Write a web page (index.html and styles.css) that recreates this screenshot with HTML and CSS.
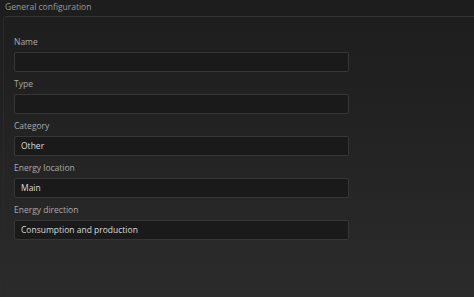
FILE: index.html
```html
<!DOCTYPE html>
<html>
<head>
<meta charset="utf-8">
<link rel="stylesheet" href="styles.css">
</head>
<body>
<div class="page">
  <div class="title">General configuration</div>
  <div class="panel">
    <div class="form">
      <div class="group">
        <div class="label">Name</div>
        <div class="input"></div>
      </div>
      <div class="group">
        <div class="label">Type</div>
        <div class="input"></div>
      </div>
      <div class="group">
        <div class="label">Category</div>
        <div class="input">Other</div>
      </div>
      <div class="group">
        <div class="label">Energy location</div>
        <div class="input">Main</div>
      </div>
      <div class="group">
        <div class="label">Energy direction</div>
        <div class="input">Consumption and production</div>
      </div>
    </div>
  </div>
</div>
</body>
</html>
```

FILE: styles.css
```css
html, body {
  margin: 0;
  padding: 0;
  height: 100%;
}
body {
  background: linear-gradient(to bottom, #1d1d1d 0%, #222 40%, #2b2b2b 100%);
  font-family: "Open Sans", "Noto Sans", sans-serif;
  overflow: hidden;
}
.page {
  width: 474px;
  height: 297px;
  display: flex;
  flex-direction: column;
}
.title {
  height: 16px;
  padding-left: 5px;
  font-size: 8.5px;
  line-height: 14px;
  color: #9a9a9a;
}
.panel {
  flex: 1;
  margin-left: 3px;
  border-top: 1px solid #333;
  border-left: 1px solid #292929;
  border-top-left-radius: 4px;
}
.form {
  padding: 17px 0 0 10px;
  display: flex;
  flex-direction: column;
  gap: 4px;
}
.group {
  display: flex;
  flex-direction: column;
  gap: 3px;
}
.label {
  height: 15px;
  font-size: 8.5px;
  line-height: 16px;
  color: #aaa;
}
.input {
  width: 327px;
  height: 18px;
  border: 1px solid #363636;
  border-radius: 2px;
  background: #1a1a1a;
  color: #dcdcdc;
  font-size: 8.5px;
  line-height: 18px;
  padding-left: 6px;
}
```
